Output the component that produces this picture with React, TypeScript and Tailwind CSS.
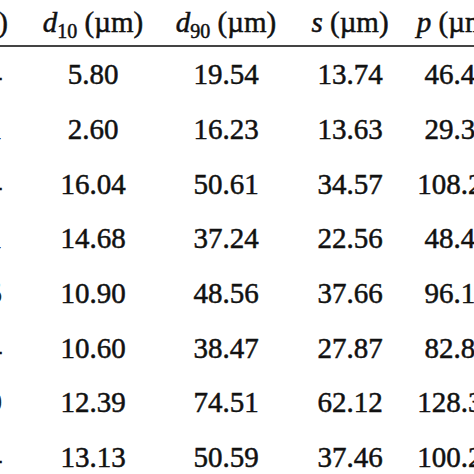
const rows = [
  ["S4", "5.80", "19.54", "13.74", "46.45"],
  ["S1", "2.60", "16.23", "13.63", "29.36"],
  ["S4", "16.04", "50.61", "34.57", "108.25"],
  ["S1", "14.68", "37.24", "22.56", "48.42"],
  ["S5", "10.90", "48.56", "37.66", "96.18"],
  ["S4", "10.60", "38.47", "27.87", "82.84"],
  ["S9", "12.39", "74.51", "62.12", "128.37"],
  ["S4", "13.13", "50.59", "37.46", "100.21"],
];

function Sym({ v, sub }: { v: string; sub?: string }) {
  return (
    <span>
      <span className="italic">{v}</span>
      {sub && <span className="text-[20px] relative top-[6px]">{sub}</span>}
    </span>
  );
}

export default function App() {
  return (
    <div className="w-[474px] h-[474px] overflow-hidden bg-white text-[#111] whitespace-nowrap text-[29px] font-['Liberation_Serif','Times_New_Roman',serif] [-webkit-text-stroke:0.5px_#111]">
      <div className="flex h-[45px] items-center">
        <div className="w-[27px] shrink-0 flex justify-end pr-[19px]">Size (µm)</div>
        <div className="w-[132px] shrink-0 text-center">
          <Sym v="d" sub="10" /> (µm)
        </div>
        <div className="w-[134px] shrink-0 text-center">
          <Sym v="d" sub="90" /> (µm)
        </div>
        <div className="w-[114px] shrink-0 text-center">
          <Sym v="s" /> (µm)
        </div>
        <div className="w-[100px] shrink-0 text-center">
          <Sym v="p" /> (µm)
        </div>
      </div>
      <div className="h-[2px] bg-[#444]" />
      <div className="h-[0.6px]" />
      {rows.map((r, i) => (
        <div key={i} className="flex h-[54.7px] items-center">
          <div className="w-[27px] shrink-0 flex justify-end pr-[25px]">{r[0]}</div>
          <div className="w-[132px] shrink-0 text-center">{r[1]}</div>
          <div className="w-[134px] shrink-0 text-center">{r[2]}</div>
          <div className="w-[114px] shrink-0 text-center">{r[3]}</div>
          <div className="w-[100px] shrink-0 text-center">{r[4]}</div>
        </div>
      ))}
    </div>
  );
}
